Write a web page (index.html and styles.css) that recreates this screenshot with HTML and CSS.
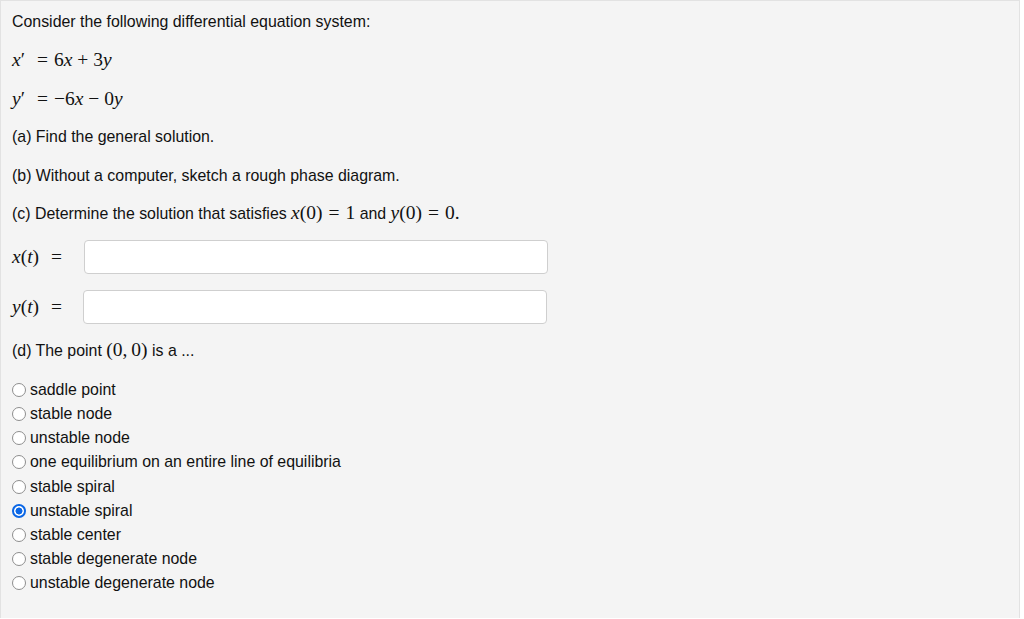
FILE: index.html
```html
<!DOCTYPE html>
<html>
<head>
<meta charset="utf-8">
<link rel="stylesheet" href="styles.css">
</head>
<body>
<div class="panel">
  <p class="line l1">Consider the following differential equation system:</p>
  <p class="line eq l2"><span class="m"><i>x</i>′<span class="rel">=</span>6<i>x</i><span class="op">+</span>3<i>y</i></span></p>
  <p class="line eq l3"><span class="m"><i>y</i>′<span class="rel">=</span>−6<i>x</i><span class="op">−</span>0<i>y</i></span></p>
  <p class="line l4">(a) Find the general solution.</p>
  <p class="line l5">(b) Without a computer, sketch a rough phase diagram.</p>
  <p class="line l6">(c) Determine the solution that satisfies <span class="m"><i>x</i>(0)<span class="op2">=</span>1</span> and <span class="m"><i>y</i>(0)<span class="op2">=</span>0.</span></p>
  <div class="row r1"><span class="label m"><i>x</i>(<i>t</i>)<span class="eqs">=</span></span><input class="field" type="text"></div>
  <div class="row r2"><span class="label m lbl2"><i>y</i>(<i>t</i>)<span class="eqs">=</span></span><input class="field" type="text"></div>
  <p class="line l7">(d) The point <span class="m">(0,<span class="thin"></span>0)</span> is a ...</p>
  <div class="choices">
    <label class="choice"><input type="radio" name="pt"><span>saddle point</span></label>
    <label class="choice"><input type="radio" name="pt"><span>stable node</span></label>
    <label class="choice"><input type="radio" name="pt"><span>unstable node</span></label>
    <label class="choice"><input type="radio" name="pt"><span>one equilibrium on an entire line of equilibria</span></label>
    <label class="choice"><input type="radio" name="pt"><span>stable spiral</span></label>
    <label class="choice"><input type="radio" name="pt" checked><span>unstable spiral</span></label>
    <label class="choice"><input type="radio" name="pt"><span>stable center</span></label>
    <label class="choice"><input type="radio" name="pt"><span>stable degenerate node</span></label>
    <label class="choice"><input type="radio" name="pt"><span>unstable degenerate node</span></label>
  </div>
</div>
</body>
</html>
```
FILE: styles.css
```css
html, body {
  margin: 0;
  padding: 0;
  background: #ffffff;
}
body {
  font-family: "Liberation Sans", Helvetica, Arial, sans-serif;
  font-size: 15.9px;
  color: #111;
}
.panel {
  width: 1020px;
  height: 618px;
  background: #f4f4f4;
  border: 1px solid #e2e2e2;
  border-bottom: none;
  padding: 11px 0 0 11px;
  box-sizing: border-box;
}
.line {
  margin: 0;
  height: 20px;
  line-height: 20px;
  white-space: nowrap;
}
.m {
  font-family: "Liberation Serif", "Times New Roman", serif;
  font-size: 19.5px;
}
.m i { font-style: italic; }
.eq .rel { margin: 0 6px 0 12px; }
.op { margin: 0 5px; }
.op2 { margin: 0 6px; }
.thin { display: inline-block; width: 4px; }
.l2 { margin-top: 18px; }
.l3 { margin-top: 19px; }
.l4 { margin-top: 18px; }
.l5 { margin-top: 19px; }
.l6 { margin-top: 17px; }
.row {
  display: flex;
  align-items: center;
  height: 34px;
}
.r1 { margin-top: 17px; }
.r2 { margin-top: 16px; }
.label {
  width: 72px;
  flex: none;
}
.lbl2 { width: 71px; }
.eqs { margin-left: 12px; }
.field {
  width: 464px;
  height: 34px;
  box-sizing: border-box;
  border: 1px solid #cfcfcf;
  border-radius: 4px;
  background: #fff;
  margin: 0;
  padding: 0 6px;
  outline: none;
}
.l7 { margin-top: 16px; }
.choices {
  margin-top: 18px;
  display: flex;
  flex-direction: column;
}
.choice {
  display: flex;
  align-items: center;
  height: 24.15px;
  white-space: nowrap;
}
.choice input {
  appearance: none;
  -webkit-appearance: none;
  width: 14px;
  height: 14px;
  margin: 0 4px 0 0;
  border: 1px solid #8e8e8e;
  border-radius: 50%;
  background: #fff;
  box-sizing: border-box;
  flex: none;
}
.choice input:checked {
  border: 2px solid #0b67e6;
  background: radial-gradient(circle, #0b67e6 0 3.2px, #fff 3.8px);
}
```
